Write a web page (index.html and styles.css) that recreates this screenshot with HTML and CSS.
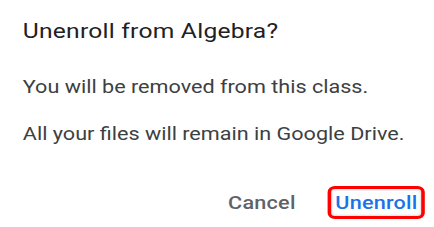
FILE: index.html
```html
<!DOCTYPE html>
<html lang="en">
<head>
  <meta charset="UTF-8" />
  <title>Unenroll</title>
  <link rel="stylesheet" href="styles.css">
</head>
<body>

<div class="dialog">
  <h2 class="title">Unenroll from Algebra?</h2>
  <p class="text">You will be removed from this class.</p>
  <p class="text">All your files will remain in Google Drive.</p>
  <div class="actions">
    <button class="btn cancel">Cancel</button>
    <button class="btn confirm">Unenroll</button>
  </div>
</div>

</body>
</html>
```

FILE: styles.css
```css
body {
  margin: 0;
  background: #fff;
  font-family: Roboto, Arial, sans-serif;
  overflow: hidden;
}
/* the whole dialog is drawn a bit wider than tall */
.dialog {
  width: 362px;
  height: 227px;
  box-sizing: border-box;
  padding: 18px 8px 0 19px;
  transform: scaleX(1.2);
  transform-origin: 0 0;
}
.title {
  margin: 0;
  font-size: 20.5px;
  font-weight: 400;
  letter-spacing: 0.2px;
  color: #202124;
  line-height: 26px;
}
.text {
  margin: 0;
  margin-top: 31px;
  font-size: 18px;
  line-height: 24px;
  color: #3c4043;
}
.text + .text {
  margin-top: 23px;
}
.actions {
  display: flex;
  justify-content: flex-end;
  align-items: center;
  gap: 24px;
  margin-top: 40px;
}
.btn {
  background: none;
  border: none;
  font-family: Roboto, Arial, sans-serif;
  font-size: 18px;
  font-weight: 500;
  letter-spacing: 0.2px;
  padding: 3px 3px;
  cursor: pointer;
}
.cancel {
  color: #5f6368;
}
.confirm {
  color: #1a73e8;
  border: 3px solid #f00;
  border-radius: 6px;
  box-shadow: inset 0 0 3px rgba(0, 0, 0, 0.25);
}
```
